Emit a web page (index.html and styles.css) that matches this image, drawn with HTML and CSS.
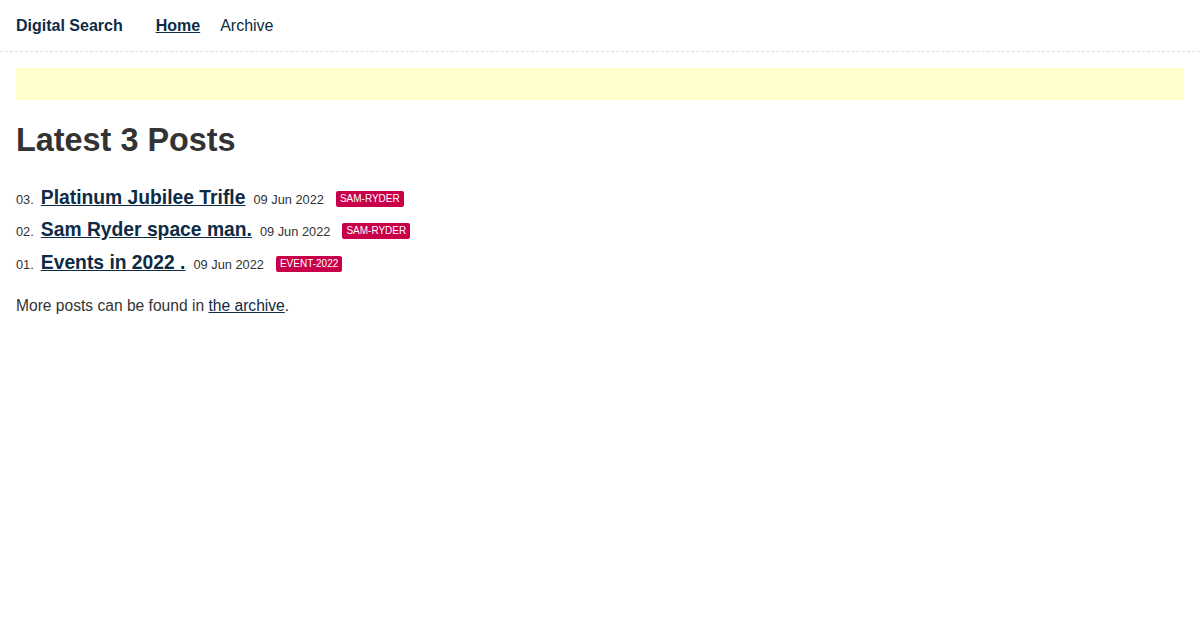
FILE: index.html
```html
<!DOCTYPE html>
<html lang="en">
<head>
    <meta charset="UTF-8">
    <meta name="viewport" content="width=device-width, initial-scale=1.0">
    <title>Digital Search</title>
    <link rel="stylesheet" href="styles.css">
</head>
<body>
    <header class="site-header">
        <a class="brand" href="#">Digital Search</a>
        <nav class="nav">
            <a class="nav-link active" href="#">Home</a>
            <a class="nav-link" href="#">Archive</a>
        </nav>
    </header>

    <main class="content">
        <div class="notice"></div>

        <h1 class="page-title">Latest 3 Posts</h1>

        <ol class="post-list">
            <li class="post-item">
                <span class="post-num">03.</span>
                <a class="post-title" href="#">Platinum Jubilee Trifle</a>
                <span class="post-date">09 Jun 2022</span>
                <span class="tag">sam-ryder</span>
            </li>
            <li class="post-item">
                <span class="post-num">02.</span>
                <a class="post-title" href="#">Sam Ryder space man.</a>
                <span class="post-date">09 Jun 2022</span>
                <span class="tag">sam-ryder</span>
            </li>
            <li class="post-item">
                <span class="post-num">01.</span>
                <a class="post-title" href="#">Events in 2022 .</a>
                <span class="post-date">09 Jun 2022</span>
                <span class="tag">event-2022</span>
            </li>
        </ol>

        <p class="more">More posts can be found in <a href="#">the archive</a>.</p>
    </main>
</body>
</html>
```

FILE: styles.css
```css
* {
    margin: 0;
    padding: 0;
    box-sizing: border-box;
}

body {
    font-family: "Liberation Sans", Arial, sans-serif;
    font-size: 16px;
    color: #333;
    background: #fff;
}

a {
    color: #0d2b45;
}

.site-header {
    display: flex;
    align-items: center;
    height: 52px;
    padding: 0 16px;
    border-bottom: 1px dashed #ddd;
}

.brand {
    font-weight: bold;
    text-decoration: none;
    margin-right: 33px;
}

.nav {
    display: flex;
    gap: 20px;
}

.nav-link {
    text-decoration: none;
}

.nav-link.active {
    font-weight: bold;
    text-decoration: underline;
}

.content {
    padding: 16px;
}

.notice {
    height: 32px;
    background: #ffffcc;
}

.page-title {
    font-size: 32.4px;
    line-height: 1.2;
    margin: 21px 0 27px;
}

.post-list {
    list-style: none;
}

.post-item {
    display: flex;
    align-items: baseline;
    height: 32.5px;
}

.post-num {
    font-size: 12.8px;
    margin-right: 7px;
}

.post-title {
    font-size: 19.3px;
    font-weight: bold;
    margin-right: 8px;
}

.post-date {
    font-size: 12.8px;
    margin-right: 12px;
}

.tag {
    align-self: flex-start;
    margin-top: 4px;
    font-size: 10px;
    line-height: 16px;
    padding: 0 4px;
    color: #fff;
    background: #c8004a;
    border-radius: 2px;
    text-transform: uppercase;
}

.more {
    margin-top: 10px;
    font-size: 15.6px;
    line-height: 1.5;
}
```
